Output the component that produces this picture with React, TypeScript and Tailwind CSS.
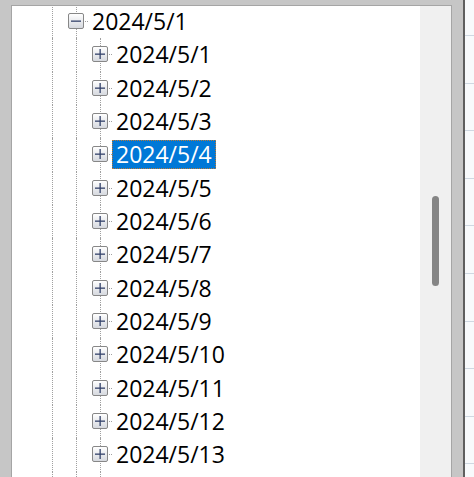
import React from 'react';

type Node = { label: string; selected?: boolean };

const children: Node[] = Array.from({ length: 13 }, (_, i) => ({
  label: `2024/5/${i + 1}`,
  selected: i === 3,
}));

// vertical connector for an ancestor level
const Guide: React.FC = () => (
  <div className="relative h-full w-[24px] shrink-0">
    <div className="absolute left-[12px] top-0 bottom-0 border-l border-dotted border-[#a0a0a0]" />
  </div>
);

const Toggle: React.FC<{ open?: boolean }> = ({ open }) => (
  <div className="relative h-full w-[24px] shrink-0">
    <div className="absolute left-[12px] top-0 bottom-0 border-l border-dotted border-[#a0a0a0]" />
    <div className="absolute left-[12px] right-0 top-[16px] border-t border-dotted border-[#a0a0a0]" />
    <div className="absolute left-[4px] top-[8px] flex h-[16px] w-[16px] items-center justify-center rounded-[2px] border border-[#878787] bg-gradient-to-b from-white to-[#d6d9df]">
      <svg width="10" height="10" viewBox="0 0 10 10">
        <rect x="0" y="4.5" width="10" height="1.3" fill="#34426a" />
        {!open && <rect x="4.5" y="0" width="1.3" height="10" fill="#34426a" />}
      </svg>
    </div>
  </div>
);

const Label: React.FC<{ text: string; selected?: boolean }> = ({ text, selected }) => (
  <span
    className={
      'border px-[3px] text-[23px] leading-[27px] ' +
      (selected
        ? 'border-dotted border-[#b97a38] bg-[#0078d7] text-white'
        : 'border-transparent text-black')
    }
  >
    {text}
  </span>
);

export default function App() {
  return (
    <div
      className="flex h-[477px] w-[474px] overflow-hidden bg-[#c6c6c6]"
      style={{ fontFamily: '"Open Sans", "Noto Sans", sans-serif' }}
    >
      <div className="flex h-full w-[463px] flex-col pl-[11px] pr-[11px] pt-[5px]">
        <div className="flex flex-1 overflow-hidden border-l border-r border-t border-[#a5a5a5] bg-white">
          {/* tree */}
          <div className="flex-1 overflow-hidden pl-[28px]">
            <div className="-mt-[1px]">
              <div className="flex h-[33.33px] items-center">
                <Guide />
                <Toggle open />
                <Label text="2024/5/1" />
              </div>
              {children.map((c) => (
                <div key={c.label} className="flex h-[33.33px] items-center">
                  <Guide />
                  <Guide />
                  <Toggle />
                  <Label text={c.label} selected={c.selected} />
                </div>
              ))}
              {/* connectors running on past the last visible node */}
              <div className="flex h-[33.33px]">
                <Guide />
                <Guide />
                <Guide />
              </div>
            </div>
          </div>
          {/* scrollbar */}
          <div className="flex w-[31px] shrink-0 justify-center bg-[#f0f0f0] pt-[190px]">
            <div className="h-[90px] w-[7px] rounded-full bg-[#858585]" />
          </div>
        </div>
      </div>
      <div className="h-full w-[2px] bg-[#5f5f5f]" />
      <div className="flex h-full flex-1 flex-col bg-[#f8fafc] pt-[35px]">
        {Array.from({ length: 10 }, (_, i) => (
          <div key={i} className="h-[47.6px] shrink-0 border-t border-[#cfd8e2]" />
        ))}
      </div>
    </div>
  );
}
